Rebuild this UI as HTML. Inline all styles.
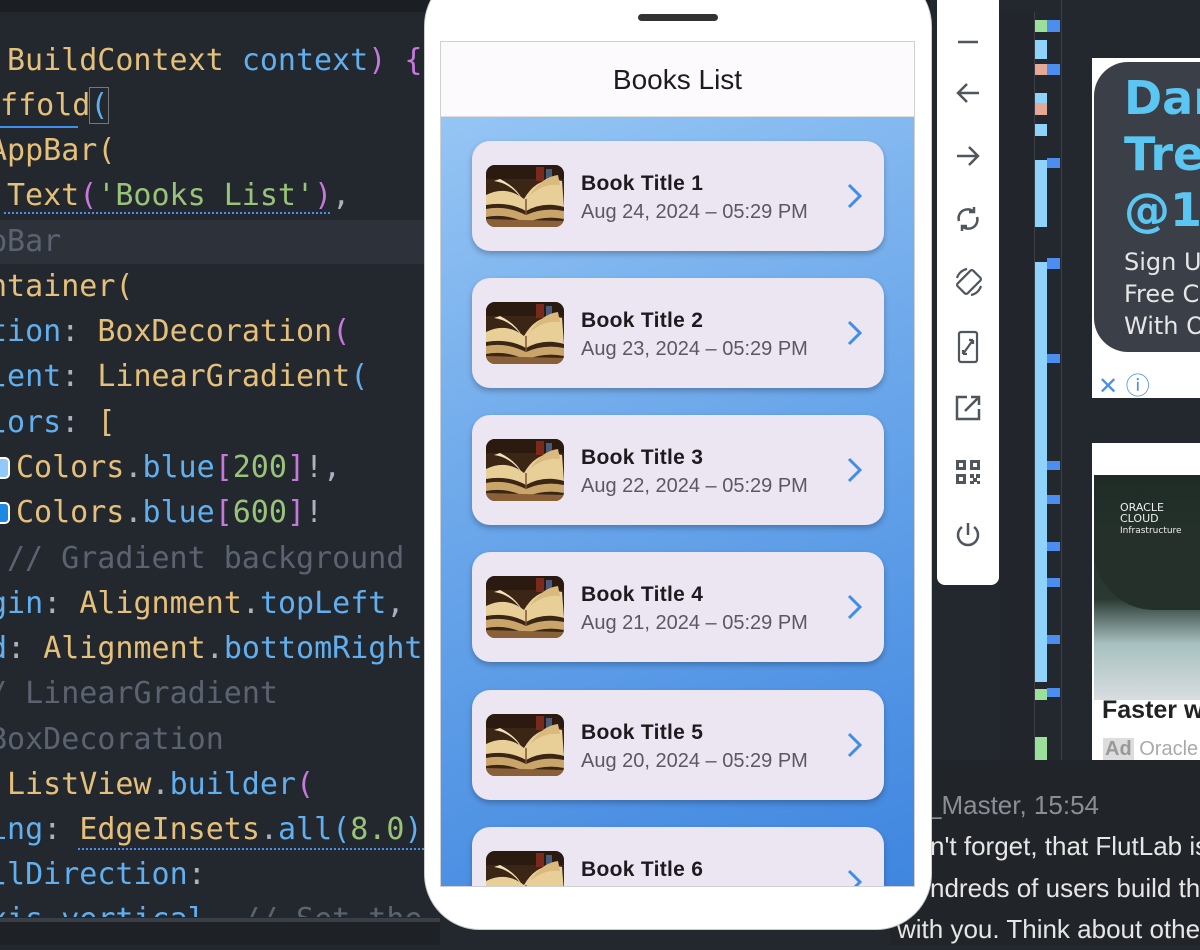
<!DOCTYPE html>
<html><head><meta charset="utf-8"><style>
*{margin:0;padding:0;box-sizing:border-box}
body{width:1200px;height:945px;overflow:hidden;background:#23272e;position:relative;font-family:"Liberation Sans",sans-serif}
.code{position:absolute;font-family:"DejaVu Sans Mono","Liberation Mono",monospace;font-size:30px;white-space:pre;color:#abb2bf;line-height:45px}
.y{color:#e5c07b}.b{color:#61afef}.p{color:#c678dd}.g{color:#98c379}.c{color:#5c6370}.w{color:#abb2bf}
.sw{display:inline-block;width:16px;height:22px;border:2px solid #fff;border-radius:5px;vertical-align:-2px;margin-right:6px}
.phone{position:absolute;left:424px;top:-30px;width:508px;height:960px;background:#fff;border-radius:56px;border:1px solid #ccc}
.screen{position:absolute;left:440px;top:41px;width:475px;height:846px;overflow:hidden;border:1px solid #d0d0d0}
.appbar{height:75px;background:#fcfafd;text-align:center;font-size:28px;line-height:75px;color:#1d1b20;border-bottom:1px solid #ddd}
.content{position:absolute;top:75px;left:0;right:0;bottom:0;background:linear-gradient(160deg,#95c5f4 0%,#6aa6ea 45%,#3f86e0 100%)}
.card{position:absolute;left:31px;width:412px;height:110px;background:#ece5f2;border-radius:18px;box-shadow:0 3px 6px rgba(0,0,0,.25)}
.img{position:absolute;left:14px;top:24px;width:78px;height:62px;border-radius:9px;overflow:hidden}
.t{position:absolute;left:109px;top:31px;font-weight:bold;font-size:21px;letter-spacing:.3px;color:#1d1b20}
.d{position:absolute;left:109px;top:60px;font-size:20px;color:#5c5860}
.ch{position:absolute;left:372px;top:40px}
.tb{position:absolute;left:937px;top:-10px;width:62px;height:595px;background:#fff;border-radius:0 0 8px 8px}
.tb svg{position:absolute;left:16px}
.bar{position:absolute;width:12px}
.l{background:#8fd3fb;left:1035px}.gr{background:#9adf9a;left:1035px}.s{background:#e4a896;left:1035px}.m{background:#4b8ef0;left:1047px;width:13px}
.chat{position:absolute;font:26px/41px "Liberation Sans",sans-serif;color:#e6e6e6;white-space:nowrap}
</style></head><body>
<svg width="0" height="0" style="position:absolute"><defs>
<symbol id="bk" viewBox="0 0 78 62"><rect width="78" height="62" fill="#3b2616"/><rect x="0" y="0" width="78" height="14" fill="#2a1a10"/><rect x="50" y="2" width="8" height="14" fill="#7a2a1a"/><rect x="60" y="4" width="6" height="12" fill="#4a5a7a"/><path d="M0 30 Q20 20 38 34 Q52 10 76 16 L78 42 Q58 36 40 46 Q22 36 0 40Z" fill="#e8cf98"/><path d="M8 16 Q24 18 36 34 Q30 22 14 14Z" fill="#f3e2b8"/><path d="M44 30 Q56 12 72 10 L74 20 Q58 18 44 30Z" fill="#d9b97c"/><path d="M0 44 Q20 40 40 50 Q58 42 78 46 L78 54 Q58 50 40 58 Q20 48 0 52Z" fill="#c9a56a"/><path d="M0 54 L78 56 L78 62 L0 62Z" fill="#8a6038"/><path d="M40 34 L40 50" stroke="#7a5530" stroke-width="1.5"/></symbol>
<symbol id="chv" viewBox="0 0 20 30"><path d="M5 4l11 11-11 11" fill="none" stroke="#3f8ee8" stroke-width="3"/></symbol>
</defs></svg>
<div style="position:absolute;left:0;top:0;width:930px;height:12px;background:#1b1e23"></div>
<div style="position:absolute;left:0;top:220px;width:430px;height:44px;background:#2c313a"></div>

<div class="code" style="left:7px;top:38px"><span class="y">BuildContext</span> <span class="b">context</span><span class="p">)</span> <span class="p">{</span></div>
<div class="code" style="left:-18px;top:83px"><span class="y">affold</span><span class="b" style="outline:1px solid #777">(</span></div>
<div style="position:absolute;left:0;top:126px;width:78px;height:2px;background:#3d8ff0"></div>
<div class="code" style="left:-11px;top:128px"><span class="y">AppBar</span><span class="y">(</span></div>
<div class="code" style="left:7px;top:173px"><span class="y">Text</span><span class="p">(</span><span class="g">'Books List'</span><span class="p">)</span>,</div>
<div style="position:absolute;left:4px;top:212px;width:326px;border-bottom:2px dotted #4a8ff0"></div>
<div class="code" style="left:-11px;top:219px"><span class="c">pBar</span></div>
<div class="code" style="left:-11px;top:264px"><span class="y">ntainer(</span></div>
<div class="code" style="left:-11px;top:309px"><span class="b">tion</span>: <span class="y">BoxDecoration</span><span class="p">(</span></div>
<div class="code" style="left:-11px;top:354px"><span class="b">lent</span>: <span class="y">LinearGradient</span><span class="b">(</span></div>
<div class="code" style="left:-11px;top:400px"><span class="b">lors</span>: <span class="y">[</span></div>
<div class="code" style="left:-6px;top:445px"><span class="sw" style="background:#90caf9"></span><span class="y">Colors</span>.<span class="b">blue</span><span class="p">[</span><span class="g">200</span><span class="p">]</span>!,</div>
<div class="code" style="left:-6px;top:490px"><span class="sw" style="background:#1e88e5"></span><span class="y">Colors</span>.<span class="b">blue</span><span class="p">[</span><span class="g">600</span><span class="p">]</span>!</div>
<div class="code" style="left:7px;top:536px"><span class="c">// Gradient background</span></div>
<div class="code" style="left:-11px;top:581px"><span class="b">gin</span>: <span class="y">Alignment</span>.<span class="b">topLeft</span>,</div>
<div class="code" style="left:-11px;top:626px"><span class="b">d</span>: <span class="y">Alignment</span>.<span class="b">bottomRight</span></div>
<div class="code" style="left:-11px;top:671px"><span class="c">/ LinearGradient</span></div>
<div class="code" style="left:-11px;top:717px"><span class="c">BoxDecoration</span></div>
<div class="code" style="left:7px;top:762px"><span class="y">ListView</span>.<span class="b">builder</span><span class="p">(</span></div>
<div class="code" style="left:-11px;top:807px"><span class="b">ing</span>: <span class="y">EdgeInsets</span>.<span class="b">all</span><span class="b">(</span><span class="g">8.0</span><span class="b">)</span></div>
<div style="position:absolute;left:78px;top:848px;width:350px;border-bottom:2px dotted #4a8ff0"></div>
<div class="code" style="left:-11px;top:852px"><span class="b">llDirection</span>:</div>
<div class="code" style="left:-11px;top:897px;height:20px;overflow:hidden"><span class="b">xis</span>.<span class="b">vertical</span>, <span class="c">// Set the</span></div>
<div style="position:absolute;left:0;top:918px;width:440px;height:4px;background:#3a3f47"></div>
<div style="position:absolute;left:0;top:922px;width:440px;height:23px;background:#1e2227"></div>

<div style="position:absolute;left:1000px;top:12px;width:35px;height:748px;background:#22262c"></div>
<div style="position:absolute;left:1034px;top:12px;width:1px;height:748px;background:#3a3f47"></div>
<div style="position:absolute;left:1061px;top:0;width:1px;height:760px;background:#3a3f47"></div>
<div class="bar gr" style="top:20px;height:12px"></div>
<div class="bar l" style="top:40px;height:19px"></div>
<div class="bar s" style="top:64px;height:11px"></div>
<div class="bar l" style="top:93px;height:10px"></div>
<div class="bar s" style="top:103px;height:12px"></div>
<div class="bar l" style="top:124px;height:12px"></div>
<div class="bar l" style="top:160px;height:67px"></div>
<div class="bar l" style="top:262px;height:420px"></div>
<div class="bar gr" style="top:689px;height:11px"></div>
<div class="bar gr" style="top:737px;height:23px"></div>
<div class="bar m" style="top:20px;height:12px"></div>
<div class="bar m" style="top:64px;height:11px"></div>
<div class="bar m" style="top:158px;height:10px"></div>
<div class="bar m" style="top:258px;height:11px"></div>
<div class="bar m" style="top:354px;height:9px"></div>
<div class="bar m" style="top:461px;height:9px"></div>
<div class="bar m" style="top:495px;height:9px"></div>
<div class="bar m" style="top:542px;height:9px"></div>
<div class="bar m" style="top:578px;height:9px"></div>
<div class="bar m" style="top:635px;height:9px"></div>
<div class="bar m" style="top:688px;height:9px"></div>

<div style="position:absolute;left:1092px;top:58px;width:108px;height:340px;background:#fff"></div>
<div style="position:absolute;left:1094px;top:62px;width:120px;height:290px;background:#3b4048;border-radius:34px 0 0 34px"></div>
<div style="position:absolute;left:1124px;top:70px;font:bold 46px/56px 'DejaVu Sans',sans-serif;color:#5cc6f3;white-space:pre">Dar
Tre
@19</div>
<div style="position:absolute;left:1124px;top:246px;font:24px/32px 'DejaVu Sans',sans-serif;color:#e6e6e6;white-space:pre">Sign Up
Free Co
With O</div>
<div style="position:absolute;left:1098px;top:366px;font:24px 'DejaVu Sans',sans-serif;color:#4a8fe0">✕ ⓘ</div>
<div style="position:absolute;left:1092px;top:443px;width:108px;height:317px;background:#fff"></div>
<div style="position:absolute;left:1094px;top:475px;width:106px;height:225px;background:linear-gradient(180deg,#1f2a25 0%,#2a3a33 55%,#a8c0c0 75%,#d8dde0 100%)"></div>
<div style="position:absolute;left:1094px;top:530px;width:106px;height:80px;background:#243029;border-radius:0 0 0 60px"></div>
<div style="position:absolute;left:1120px;top:502px;font:11px/11px 'DejaVu Sans',sans-serif;color:#eee">ORACLE<br>CLOUD<br><span style="font-size:9px">Infrastructure</span></div>
<div style="position:absolute;left:1102px;top:696px;font:bold 25px 'Liberation Sans',sans-serif;color:#222;white-space:nowrap">Faster w</div>
<div style="position:absolute;left:1103px;top:738px;font:20px 'Liberation Sans',sans-serif;color:#aaa;white-space:nowrap"><span style="background:#ddd;color:#999;font-weight:bold;padding:0 2px">Ad</span> Oracle</div>

<div style="position:absolute;left:890px;top:760px;width:310px;height:185px;background:#212429"></div>
<div class="chat" style="left:927px;top:785px;color:#8a8f96">_Master, 15:54</div>
<div class="chat" style="left:930px;top:826px">n't forget, that FlutLab is</div>
<div class="chat" style="left:930px;top:868px">ndreds of users build them</div>
<div class="chat" style="left:897px;top:909px">with you. Think about other</div>

<div class="tb">
<svg style="top:45px" width="30" height="14" viewBox="0 0 30 14"><path d="M5 7h20" stroke="#4f565e" stroke-width="2.5"/></svg>
<svg style="top:88px" width="30" height="30" viewBox="0 0 30 30" fill="none" stroke="#4f565e" stroke-width="2.5"><path d="M26 15H5M14 6l-9 9 9 9"/></svg>
<svg style="top:151px" width="30" height="30" viewBox="0 0 30 30" fill="none" stroke="#4f565e" stroke-width="2.5"><path d="M4 15h21M16 6l9 9-9 9"/></svg>
<svg style="top:214px" width="30" height="30" viewBox="0 0 30 30" fill="none" stroke="#4f565e" stroke-width="2.5"><path d="M6 17a9 9 0 0 1 15-9M24 13a9 9 0 0 1-15 9M21 3v5h-5M9 27v-5h5"/></svg>
<svg style="top:276px" width="32" height="32" viewBox="0 0 32 32" fill="none" stroke="#4f565e" stroke-width="2.2"><rect x="9" y="5" width="14" height="22" rx="2" transform="rotate(45 16 16)"/><path d="M4 12a13 13 0 0 1 10-9M28 20a13 13 0 0 1-10 9"/></svg>
<svg style="top:340px" width="30" height="34" viewBox="0 0 30 34" fill="none" stroke="#4f565e" stroke-width="2.2"><rect x="6" y="2" width="18" height="30" rx="2"/><path d="M10 24l10-14M10 24h4M10 24v-4M20 10h-4M20 10v4"/></svg>
<svg style="top:403px" width="30" height="30" viewBox="0 0 30 30" fill="none" stroke="#4f565e" stroke-width="2.5"><path d="M14 4H4v22h22V16M12 18L26 4M18 4h8v8"/></svg>
<svg style="top:467px" width="30" height="30" viewBox="0 0 30 30" fill="#4f565e"><rect x="3" y="3" width="10" height="10"/><rect x="17" y="3" width="10" height="10"/><rect x="3" y="17" width="10" height="10"/><rect x="6" y="6" width="4" height="4" fill="#fff"/><rect x="20" y="6" width="4" height="4" fill="#fff"/><rect x="6" y="20" width="4" height="4" fill="#fff"/><rect x="17" y="17" width="4" height="4"/><rect x="23" y="17" width="4" height="4"/><rect x="20" y="21" width="4" height="4"/><rect x="17" y="24" width="4" height="3"/><rect x="24" y="24" width="3" height="3"/></svg>
<svg style="top:530px" width="30" height="30" viewBox="0 0 30 30" fill="none" stroke="#4f565e" stroke-width="2.5"><path d="M15 3v12M9 7a10 10 0 1 0 12 0"/></svg>
</div>

<div class="phone"></div>
<div style="position:absolute;left:638px;top:14px;width:80px;height:7px;border-radius:4px;background:#333"></div>
<div class="screen">
<div class="appbar">Books List</div>
<div class="content">
<div class="card" style="top:24px"><svg class="img"><use href="#bk"/></svg><div class="t">Book Title 1</div><div class="d">Aug 24, 2024 – 05:29 PM</div><svg class="ch" width="20" height="30"><use href="#chv"/></svg></div>
<div class="card" style="top:161px"><svg class="img"><use href="#bk"/></svg><div class="t">Book Title 2</div><div class="d">Aug 23, 2024 – 05:29 PM</div><svg class="ch" width="20" height="30"><use href="#chv"/></svg></div>
<div class="card" style="top:298px"><svg class="img"><use href="#bk"/></svg><div class="t">Book Title 3</div><div class="d">Aug 22, 2024 – 05:29 PM</div><svg class="ch" width="20" height="30"><use href="#chv"/></svg></div>
<div class="card" style="top:435px"><svg class="img"><use href="#bk"/></svg><div class="t">Book Title 4</div><div class="d">Aug 21, 2024 – 05:29 PM</div><svg class="ch" width="20" height="30"><use href="#chv"/></svg></div>
<div class="card" style="top:573px"><svg class="img"><use href="#bk"/></svg><div class="t">Book Title 5</div><div class="d">Aug 20, 2024 – 05:29 PM</div><svg class="ch" width="20" height="30"><use href="#chv"/></svg></div>
<div class="card" style="top:710px"><svg class="img"><use href="#bk"/></svg><div class="t">Book Title 6</div><div class="d">Aug 19, 2024 – 05:29 PM</div><svg class="ch" width="20" height="30"><use href="#chv"/></svg></div>
</div>
</div>
</body></html>
